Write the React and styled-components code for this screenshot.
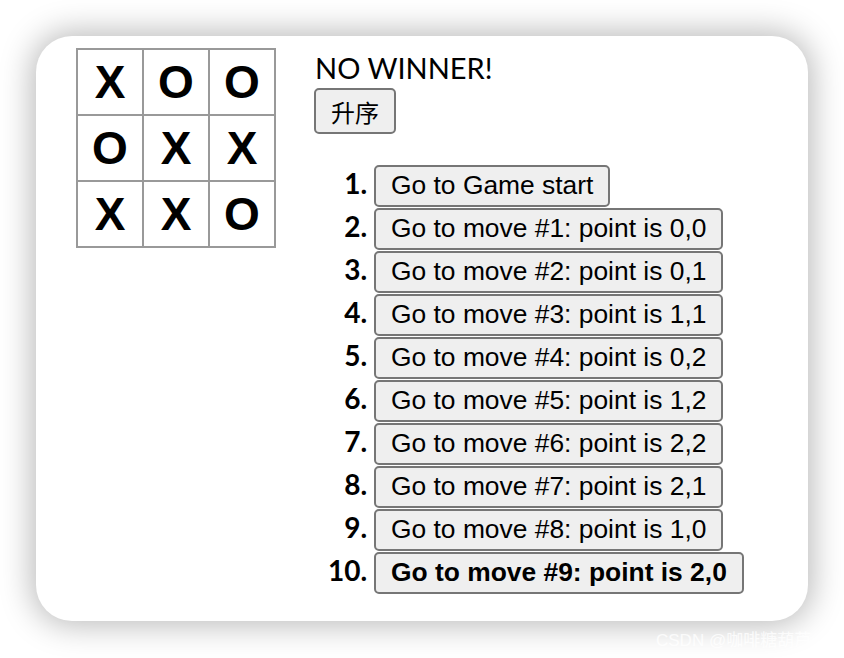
import styled, { createGlobalStyle } from "styled-components";

const GlobalStyle = createGlobalStyle`
  html, body {
    margin: 0;
    padding: 0;
    background: #ffffff;
  }
  body {
    font-family: "Lato", "Noto Sans", sans-serif;
  }
`;

const squares = ["X", "O", "O", "O", "X", "X", "X", "X", "O"];

const moves = [
  "Go to Game start",
  "Go to move #1: point is 0,0",
  "Go to move #2: point is 0,1",
  "Go to move #3: point is 1,1",
  "Go to move #4: point is 0,2",
  "Go to move #5: point is 1,2",
  "Go to move #6: point is 2,2",
  "Go to move #7: point is 2,1",
  "Go to move #8: point is 1,0",
  "Go to move #9: point is 2,0",
];

function App() {
  return (
    <>
      <GlobalStyle />
      <Page>
        <Card>
          <Game>
            <Board>
              {squares.map((val, key) => (
                <Square key={key}>{val}</Square>
              ))}
            </Board>
            <GameInfo>
              <Status>NO WINNER!</Status>
              <SortButton>升序</SortButton>
              <MoveList>
                {moves.map((val, key) => (
                  <MoveItem key={key}>
                    <MoveButton current={key === moves.length - 1}>
                      {val}
                    </MoveButton>
                  </MoveItem>
                ))}
              </MoveList>
            </GameInfo>
          </Game>
        </Card>
        <Watermark>CSDN @咖啡糖葫芦</Watermark>
      </Page>
    </>
  );
}

const Page = styled.div`
  position: relative;
  width: 844px;
  height: 658px;
  padding-top: 36px;
  box-sizing: border-box;
  overflow: hidden;
`;

const Card = styled.div`
  width: 772px;
  height: 585px;
  margin: 0 auto;
  background: #ffffff;
  border-radius: 36px;
  box-shadow: 0 0 32px 4px rgba(0, 0, 0, 0.28);
  box-sizing: border-box;
  padding: 12px 41px;
`;

const Game = styled.div`
  display: flex;
  flex-direction: row;
`;

const Board = styled.div`
  display: grid;
  grid-template-columns: repeat(3, 64px);
  grid-template-rows: repeat(3, 64px);
  gap: 2px;
  padding: 2px;
  background: #999999;
  align-self: flex-start;
  margin-left: -1px;
`;

const Square = styled.div`
  background: #ffffff;
  display: flex;
  align-items: center;
  justify-content: center;
  font-family: "Liberation Sans", Arial, sans-serif;
  font-weight: bold;
  font-size: 46px;
  line-height: 1;
  color: #000000;
`;

const GameInfo = styled.div`
  margin-left: 39px;
  font-size: 27px;
  color: #000000;
`;

const Status = styled.div`
  font-size: 29px;
  line-height: 32px;
  margin-top: 4px;
  margin-bottom: 4px;
`;

const SortButton = styled.button`
  font-family: "Noto Sans CJK SC", sans-serif;
  font-size: 24px;
  height: 46px;
  padding: 0 15px;
  border: 2px solid #767676;
  border-radius: 5px;
  background: #efefef;
  color: #000000;
  box-sizing: border-box;
  margin-left: -1px;
`;

const MoveList = styled.ol`
  margin: 29px 0 0;
  padding-left: 59px;
`;

const MoveItem = styled.li`
  height: 43px;
  line-height: 41px;
  &::marker {
    font-family: "Lato", sans-serif;
    font-size: 28px;
    font-weight: bold;
  }
`;

const MoveButton = styled.button`
  font-family: "Liberation Sans", Arial, sans-serif;
  font-size: 26.4px;
  font-weight: ${(props) => (props.current ? "bold" : "normal")};
  height: 42px;
  padding: 0 15px;
  border: 2px solid #767676;
  border-radius: 5px;
  background: #efefef;
  color: #000000;
  box-sizing: border-box;
  vertical-align: baseline;
`;

const Watermark = styled.div`
  position: absolute;
  left: 656px;
  top: 626px;
  font-family: "Liberation Sans", "Noto Sans CJK SC", sans-serif;
  font-size: 17px;
  color: rgba(255, 255, 255, 0.8);
  white-space: nowrap;
`;

export default App;
